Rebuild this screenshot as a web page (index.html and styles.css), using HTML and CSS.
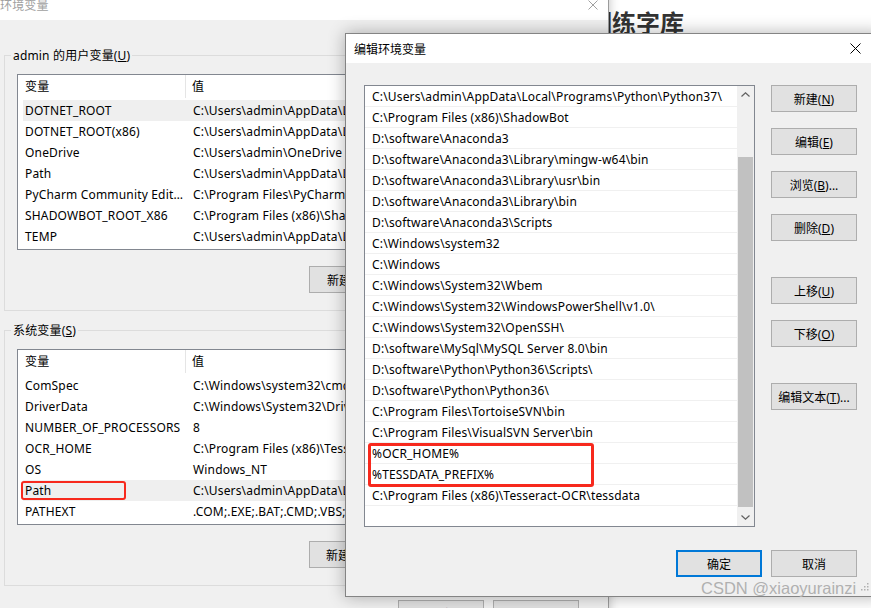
FILE: index.html
```html
<!DOCTYPE html>
<html lang="zh-CN">
<head>
  <meta charset="UTF-8" />
  <title>编辑环境变量</title>
  <link rel="stylesheet" href="styles.css">
</head>
<body>
  <!-- page behind the dialogs -->
  <h2 class="site-title">训练字库</h2>

  <!-- 环境变量 window -->
  <div class="env-win">
    <div class="titlebar">
      <span class="env-caption">环境变量</span>
      <svg class="x-icon" width="10" height="10" viewBox="0 0 10 10"><path d="M0.5 0.5L9.5 9.5M9.5 0.5L0.5 9.5" stroke="#a0a0a0" stroke-width="1" fill="none"/></svg>
    </div>
    <div class="env-body">
      <div class="group">
        <div class="group-label">admin 的用户变量(<u>U</u>)</div>
        <div class="var-list">
          <div class="var-head"><div class="col-name">变量</div><div class="col-val">值</div></div>
          <div class="var-row selected"><div class="col-name">DOTNET_ROOT</div><div class="col-val">C:\Users\admin\AppData\Local\Microsoft\dotnet\</div></div>
          <div class="var-row"><div class="col-name">DOTNET_ROOT(x86)</div><div class="col-val">C:\Users\admin\AppData\Local\Microsoft\dotnet\x86\</div></div>
          <div class="var-row"><div class="col-name">OneDrive</div><div class="col-val">C:\Users\admin\OneDrive</div></div>
          <div class="var-row"><div class="col-name">Path</div><div class="col-val">C:\Users\admin\AppData\Local\Programs\Python\Python37\</div></div>
          <div class="var-row"><div class="col-name">PyCharm Community Edition</div><div class="col-val">C:\Program Files\PyCharm Community Edition\bin;</div></div>
          <div class="var-row"><div class="col-name">SHADOWBOT_ROOT_X86</div><div class="col-val">C:\Program Files (x86)\ShadowBot</div></div>
          <div class="var-row"><div class="col-name">TEMP</div><div class="col-val">C:\Users\admin\AppData\Local\Temp</div></div>
        </div>
        <div class="btn-row">
          <button class="btn">新建(<u>N</u>)...</button>
          <button class="btn">编辑(<u>E</u>)...</button>
          <button class="btn">删除(<u>D</u>)</button>
        </div>
      </div>

      <div class="group group-sys">
        <div class="group-label">系统变量(<u>S</u>)</div>
        <div class="var-list">
          <div class="var-head"><div class="col-name">变量</div><div class="col-val">值</div></div>
          <div class="var-row"><div class="col-name">ComSpec</div><div class="col-val">C:\Windows\system32\cmd.exe</div></div>
          <div class="var-row"><div class="col-name">DriverData</div><div class="col-val">C:\Windows\System32\Drivers\DriverData</div></div>
          <div class="var-row"><div class="col-name">NUMBER_OF_PROCESSORS</div><div class="col-val">8</div></div>
          <div class="var-row"><div class="col-name">OCR_HOME</div><div class="col-val">C:\Program Files (x86)\Tesseract-OCR</div></div>
          <div class="var-row"><div class="col-name">OS</div><div class="col-val">Windows_NT</div></div>
          <div class="var-row selected"><div class="col-name">Path</div><div class="col-val">C:\Users\admin\AppData\Local\Programs\Python\Python37\</div></div>
          <div class="var-row"><div class="col-name">PATHEXT</div><div class="col-val">.COM;.EXE;.BAT;.CMD;.VBS;.VBE;.JS;.JSE;.WSF;.WSH;.MSC</div></div>
        </div>
        <div class="btn-row">
          <button class="btn">新建(<u>W</u>)...</button>
          <button class="btn">编辑(<u>I</u>)...</button>
          <button class="btn">删除(<u>L</u>)</button>
        </div>
      </div>

      <div class="dlg-foot">
        <button class="btn">确定</button>
        <button class="btn">取消</button>
      </div>
    </div>
  </div>

  <!-- 编辑环境变量 window -->
  <div class="edit-win">
    <div class="edit-title">
      <span>编辑环境变量</span>
      <svg class="x-icon" width="11" height="11" viewBox="0 0 11 11"><path d="M0.5 0.5L10.5 10.5M10.5 0.5L0.5 10.5" stroke="#000" stroke-width="1" fill="none"/></svg>
    </div>
    <div class="edit-body">
      <div class="edit-main">
        <div class="path-list">
          <div class="path-rows">
            <div class="path-row">C:\Users\admin\AppData\Local\Programs\Python\Python37\</div>
            <div class="path-row">C:\Program Files (x86)\ShadowBot</div>
            <div class="path-row">D:\software\Anaconda3</div>
            <div class="path-row">D:\software\Anaconda3\Library\mingw-w64\bin</div>
            <div class="path-row">D:\software\Anaconda3\Library\usr\bin</div>
            <div class="path-row">D:\software\Anaconda3\Library\bin</div>
            <div class="path-row">D:\software\Anaconda3\Scripts</div>
            <div class="path-row">C:\Windows\system32</div>
            <div class="path-row">C:\Windows</div>
            <div class="path-row">C:\Windows\System32\Wbem</div>
            <div class="path-row">C:\Windows\System32\WindowsPowerShell\v1.0\</div>
            <div class="path-row">C:\Windows\System32\OpenSSH\</div>
            <div class="path-row">D:\software\MySql\MySQL Server 8.0\bin</div>
            <div class="path-row">D:\software\Python\Python36\Scripts\</div>
            <div class="path-row">D:\software\Python\Python36\</div>
            <div class="path-row">C:\Program Files\TortoiseSVN\bin</div>
            <div class="path-row">C:\Program Files\VisualSVN Server\bin</div>
            <div class="path-row">%OCR_HOME%</div>
            <div class="path-row">%TESSDATA_PREFIX%</div>
            <div class="path-row">C:\Program Files (x86)\Tesseract-OCR\tessdata</div>
          </div>
          <div class="scrollbar">
            <div class="sb-arrow">
              <svg width="9" height="5" viewBox="0 0 9 5"><path d="M0.5 4.5L4.5 0.8L8.5 4.5" stroke="#606060" stroke-width="1.2" fill="none"/></svg>
            </div>
            <div class="sb-track"><div class="sb-thumb"></div></div>
            <div class="sb-arrow">
              <svg width="9" height="5" viewBox="0 0 9 5"><path d="M0.5 0.5L4.5 4.2L8.5 0.5" stroke="#606060" stroke-width="1.2" fill="none"/></svg>
            </div>
          </div>
        </div>

        <div class="side-btns">
          <button class="btn">新建(<u>N</u>)</button>
          <button class="btn">编辑(<u>E</u>)</button>
          <button class="btn">浏览(<u>B</u>)...</button>
          <button class="btn">删除(<u>D</u>)</button>
          <button class="btn btn-sep">上移(<u>U</u>)</button>
          <button class="btn">下移(<u>O</u>)</button>
          <button class="btn btn-sep">编辑文本(<u>T</u>)...</button>
        </div>
      </div>

      <div class="edit-foot">
        <button class="btn btn-default">确定</button>
        <button class="btn">取消</button>
      </div>
    </div>
  </div>

  <!-- annotations on the screenshot -->
  <div class="mark mark-path"></div>
  <div class="mark mark-ocr"></div>

  <div class="watermark">CSDN @xiaoyurainzi</div>
  <svg class="grip" width="8" height="8" viewBox="0 0 8 8">
    <rect x="6" y="0" width="1.5" height="1.5" fill="#b0b0b0"/>
    <rect x="3" y="3" width="1.5" height="1.5" fill="#b0b0b0"/>
    <rect x="6" y="3" width="1.5" height="1.5" fill="#b0b0b0"/>
    <rect x="0" y="6" width="1.5" height="1.5" fill="#b0b0b0"/>
    <rect x="3" y="6" width="1.5" height="1.5" fill="#b0b0b0"/>
    <rect x="6" y="6" width="1.5" height="1.5" fill="#b0b0b0"/>
  </svg>
</body>
</html>
```

FILE: styles.css
```css
* {
  box-sizing: border-box;
}

body {
  margin: 0;
  width: 871px;
  height: 608px;
  position: relative;
  overflow: hidden;
  background: #fff;
  font-family: "Noto Sans", "Noto Sans CJK SC", sans-serif;
  font-size: 12px;
  letter-spacing: 0.17px;
  color: #000;
}

u {
  text-decoration: underline;
  text-underline-offset: 1px;
}

/* web page peeking out behind */
.site-title {
  position: absolute;
  left: 588px;
  top: 6px;
  margin: 0;
  font-family: "Noto Sans CJK SC", sans-serif;
  font-size: 24px;
  font-weight: bold;
  line-height: 32px;
  letter-spacing: 0;
  color: #333;
}

.btn {
  width: 86px;
  height: 27px;
  padding: 0;
  border: 1px solid #adadad;
  background: #e1e1e1;
  font-family: inherit;
  font-size: 12px;
  letter-spacing: 0;
  color: #000;
  white-space: nowrap;
}

/* ---- 环境变量 ---- */
.env-win {
  position: absolute;
  left: -10px;
  top: -10px;
  width: 619px;
  height: 640px;
  background: #f0f0f0;
  border-right: 1px solid #9b9b9b;
  box-shadow: 0 0 10px rgba(0, 0, 0, 0.25);
  z-index: 1;
}

.titlebar {
  height: 30px;
  background: #fff;
  display: flex;
  align-items: center;
  justify-content: space-between;
  padding: 0 10px 0 10px;
}

.env-caption {
  color: #a0a0a0;
}

.env-body {
  padding: 0 10px 0 14px;
}

.group {
  margin-top: 35px;
  border: 1px solid #dcdcdc;
  padding: 0 12px 17px 12px;
}

.group-sys {
  margin-top: 19px;
}

.group-label {
  width: fit-content;
  margin: -9px 0 0 -6px;
  padding: 0 2px;
  line-height: 17px;
  background: #f0f0f0;
}

.var-list {
  margin-top: 10px;
  height: 176px;
  background: #fff;
  border: 1px solid #828790;
  overflow: hidden;
}

.var-head {
  display: flex;
  height: 23px;
  line-height: 23px;
  margin-bottom: 2px;
}

.var-head .col-name {
  width: 168px;
  padding-left: 7px;
  border-right: 1px solid #e5e5e5;
}

.var-head .col-val {
  padding-left: 6px;
}

.var-row {
  display: flex;
  height: 21px;
  line-height: 21px;
  margin-left: 5px;
  white-space: nowrap;
}

.var-row.selected {
  background: #efefef;
}

.var-row .col-name {
  width: 163px;
  flex-shrink: 0;
  padding: 0 3px 0 2px;
  overflow: hidden;
  text-overflow: ellipsis;
}

.var-row .col-val {
  padding-left: 7px;
}

.btn-row {
  display: flex;
  justify-content: flex-end;
  gap: 9px;
  margin-top: 16px;
}

.dlg-foot {
  display: flex;
  justify-content: flex-end;
  gap: 9px;
  margin-top: 14px;
  padding-right: 19px;
}

/* ---- 编辑环境变量 ---- */
.edit-win {
  position: absolute;
  left: 345px;
  top: 33px;
  width: 540px;
  height: 564px;
  background: #f0f0f0;
  border: 1px solid #848484;
  box-shadow: 0 0 16px rgba(0, 0, 0, 0.3);
  z-index: 2;
}

.edit-title {
  height: 29px;
  background: #fff;
  display: flex;
  align-items: center;
  justify-content: space-between;
  padding: 0 23px 0 8px;
  letter-spacing: 0;
}

.edit-body {
  padding: 22px 0 0 18px;
}

.edit-main {
  display: flex;
}

.path-list {
  display: flex;
  width: 391px;
  height: 442px;
  background: #fff;
  border: 1px solid #828790;
}

.path-rows {
  flex: 1;
}

.path-row {
  height: 21px;
  padding: 2px 0 0 7px;
  line-height: 18px;
  border-bottom: 1px solid #f0f0f0;
  white-space: nowrap;
}

.scrollbar {
  width: 17px;
  display: flex;
  flex-direction: column;
  background: #f0f0f0;
}

.sb-arrow {
  height: 17px;
  display: flex;
  align-items: center;
  justify-content: center;
}

.sb-track {
  flex: 1;
}

.sb-thumb {
  margin: 54px 1px 0 1px;
  height: 350px;
  background: #c1c1c1;
}

.side-btns {
  display: flex;
  flex-direction: column;
  gap: 16px;
  margin: 0 0 0 16px;
}

.side-btns .btn-sep {
  margin-top: 20px;
}

.edit-foot {
  width: 493px;
  display: flex;
  justify-content: flex-end;
  gap: 9px;
  margin-top: 23px;
}

.btn-default {
  border: 2px solid #0078d7;
}

/* ---- annotations ---- */
.mark {
  position: absolute;
  border: 2px solid #f7291d;
  border-radius: 3px;
  z-index: 3;
}

.mark-path {
  left: 21px;
  top: 481px;
  width: 105px;
  height: 19px;
}

.mark-ocr {
  left: 368px;
  top: 443px;
  width: 226px;
  height: 44px;
  border-width: 3px;
}

.watermark {
  position: absolute;
  left: 701px;
  top: 580px;
  font-family: "Liberation Sans", Arial, sans-serif;
  font-size: 16.5px;
  line-height: 17px;
  letter-spacing: 0;
  color: #b0b0b0;
  z-index: 4;
}

.grip {
  position: absolute;
  left: 861px;
  top: 583px;
  z-index: 4;
}
```
